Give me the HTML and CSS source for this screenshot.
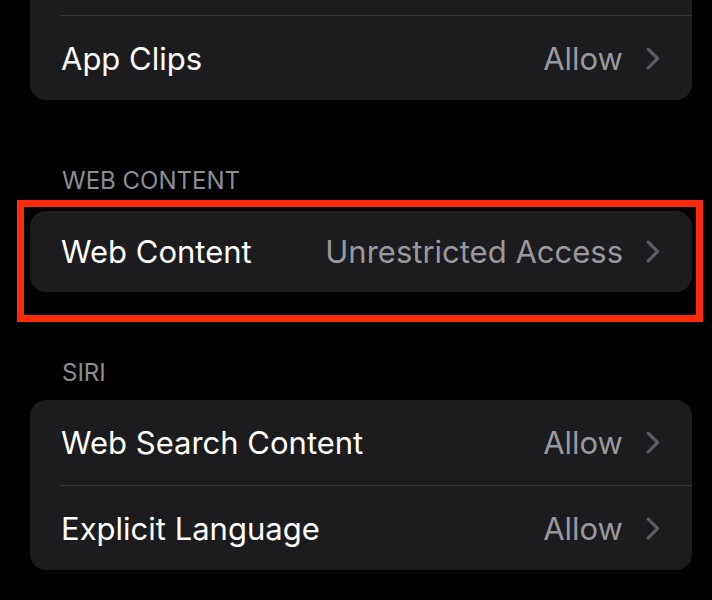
FILE: index.html
```html
<!DOCTYPE html>
<html lang="en">
<head>
<meta charset="utf-8">
<title>Content &amp; Privacy Restrictions</title>
<link rel="stylesheet" href="styles.css">
</head>
<body>
<div class="screen">
  <section class="group group-first">
    <div class="row row-hidden"></div>
    <div class="sep"></div>
    <div class="row row-last">
      <span class="label">App Clips</span>
      <span class="value">Allow</span>
      <svg class="chev" width="14" height="23" viewBox="0 0 14 23"><path d="M2.2 2.2 L11.6 11.5 L2.2 20.8" /></svg>
    </div>
  </section>

  <div class="header header-web">WEB CONTENT</div>
  <div class="highlight">
    <section class="group">
      <div class="row row-single">
        <span class="label">Web Content</span>
        <span class="value">Unrestricted Access</span>
        <svg class="chev" width="14" height="23" viewBox="0 0 14 23"><path d="M2.2 2.2 L11.6 11.5 L2.2 20.8" /></svg>
      </div>
    </section>
  </div>

  <div class="header header-siri">SIRI</div>
  <section class="group group-siri">
    <div class="row">
      <span class="label">Web Search Content</span>
      <span class="value">Allow</span>
      <svg class="chev" width="14" height="23" viewBox="0 0 14 23"><path d="M2.2 2.2 L11.6 11.5 L2.2 20.8" /></svg>
    </div>
    <div class="sep"></div>
    <div class="row row-last">
      <span class="label">Explicit Language</span>
      <span class="value">Allow</span>
      <svg class="chev" width="14" height="23" viewBox="0 0 14 23"><path d="M2.2 2.2 L11.6 11.5 L2.2 20.8" /></svg>
    </div>
  </section>
</div>
</body>
</html>
```

FILE: styles.css
```css
html, body {
  margin: 0;
  padding: 0;
  background: #000;
}

body {
  font-family: Inter, "Liberation Sans", sans-serif;
  color: #fff;
  overflow: hidden;
  height: 600px;
}

.screen {
  width: 712px;
  display: flex;
  flex-direction: column;
}

.group {
  background: #1c1c1e;
  border-radius: 16px;
  width: 662px;
  margin-left: 30px;
  display: flex;
  flex-direction: column;
  overflow: hidden;
}

.group-first {
  margin-top: -70px;
}

.row {
  height: 85px;
  display: flex;
  align-items: center;
  padding: 0 32px 0 31px;
  box-sizing: border-box;
}

.row-last {
  height: 84px;
}

.row-single {
  height: 81px;
}

.label {
  font-size: 31px;
  color: #fff;
  flex: 1;
  white-space: nowrap;
}

.value {
  font-size: 31px;
  color: #98989e;
  margin-right: 23px;
  white-space: nowrap;
}

.chev {
  display: block;
  flex: none;
}

.chev path {
  fill: none;
  stroke: #5b5b60;
  stroke-width: 3.2;
  stroke-linecap: round;
  stroke-linejoin: round;
}

.sep {
  height: 1px;
  background: #38383a;
  margin-left: 30px;
}

.header {
  font-size: 24px;
  line-height: 28px;
  color: #8d8d92;
  padding-left: 62px;
}

.header-web {
  margin-top: 67px;
}

.highlight {
  margin-top: 5px;
  margin-left: 17px;
  width: 686px;
  box-sizing: border-box;
  border: 7px solid #fb2a0d;
  padding: 4px 4px 23px 6px;
}

.highlight .group {
  margin-left: 0;
}

.header-siri {
  margin-top: 37px;
}

.group-siri {
  margin-top: 13px;
}
```
